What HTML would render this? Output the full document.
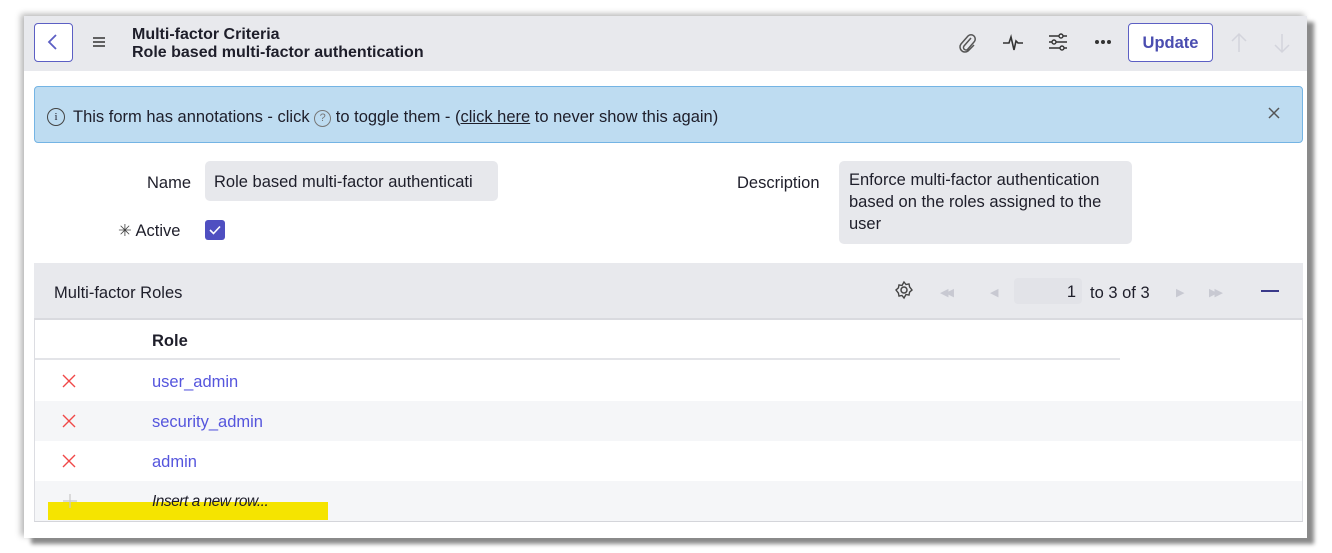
<!DOCTYPE html>
<html><head><style>
*{box-sizing:border-box;margin:0;padding:0}
body{width:1332px;height:553px;background:#fff;position:relative;font-family:"Liberation Sans",sans-serif;color:#1e1e2a;overflow:hidden}
.frame{position:absolute;left:24px;top:16px;width:1283px;height:522px;background:#fff;box-shadow:7px 6px 4px #8a8a8a,-3px -2px 6px #b5b5b5}
.abs{position:absolute}
.hdr{left:0;top:0;width:1283px;height:55px;background:#e8e9ed}
.back{left:10px;top:7px;width:39px;height:39px;border:1.5px solid #5c5fc4;border-radius:4px;background:#fff}
.t1{left:108px;top:10px;font-size:16px;font-weight:bold;line-height:18px}
.upd{left:1104px;top:7px;width:85px;height:39px;border:1.5px solid #5c5fc4;border-radius:4px;background:#fff;color:#4a4db0;font-weight:bold;font-size:16.5px;text-align:center;line-height:38px}
.banner{left:10px;top:70px;width:1269px;height:57px;background:#bedcf1;border:1px solid #74b4e4;border-radius:4px;font-size:16.5px;line-height:60px;padding-left:38px}
.lbl{font-size:16.5px}
.fld{background:#e7e8ec;border-radius:5px}
.sec{left:10px;top:247px;width:1269px;height:57px;background:#e8e9ed;border-bottom:2px solid #d9dadf}
.tbl{left:10px;top:304px;width:1269px;height:202px;border-left:1px solid #dcdde2;border-right:1px solid #dcdde2;border-bottom:2px solid #d4d5da}
.row{position:absolute;left:0;width:1267px;height:40px;font-size:16.5px;line-height:42px}
.row a{position:absolute;left:117px;color:#5555dd;text-decoration:none}
.x{position:absolute;left:27px;top:13px}
</style></head><body>
<div class="frame">
 <div class="abs hdr"></div>
 <div class="abs back"><svg width="36" height="36" viewBox="0 0 36 36" style="position:absolute;left:0;top:0"><path d="M21 11 L14 18 L21 25" fill="none" stroke="#5c5fc4" stroke-width="1.8"/></svg></div>
 <svg class="abs" style="left:68px;top:20px" width="14" height="12"><path d="M1 2H13M1 6H13M1 10H13" stroke="#333" stroke-width="1.6"/></svg>
 <div class="abs t1">Multi-factor Criteria<br>Role based multi-factor authentication</div>
 <svg class="abs" style="left:934px;top:16px" width="20" height="22" viewBox="0 0 20 22"><path d="M13 6 L6 14 a2.5 2.5 0 0 0 3.5 3.5 L16 10 a4 4 0 0 0 -6 -6 L3 12 a5 5 0 0 0 7 7 L16 13" fill="none" stroke="#555" stroke-width="1.5"/></svg>
 <svg class="abs" style="left:978px;top:17px" width="22" height="20"><path d="M1 10H7L9 4L12 17L14 8L16 10H21" fill="none" stroke="#333" stroke-width="1.6"/></svg>
 <svg class="abs" style="left:1023px;top:16px" width="22" height="20"><path d="M2 4H20M2 10H20M2 16H20" stroke="#333" stroke-width="1.4"/><circle cx="14" cy="4" r="2" fill="#e8e9ed" stroke="#333" stroke-width="1.4"/><circle cx="7" cy="10" r="2" fill="#e8e9ed" stroke="#333" stroke-width="1.4"/><circle cx="15" cy="16" r="2" fill="#e8e9ed" stroke="#333" stroke-width="1.4"/></svg>
 <svg class="abs" style="left:1070px;top:23px" width="18" height="6"><circle cx="3" cy="3" r="2" fill="#333"/><circle cx="9" cy="3" r="2" fill="#333"/><circle cx="15" cy="3" r="2" fill="#333"/></svg>
 <div class="abs upd">Update</div>
 <svg class="abs" style="left:1205px;top:16px" width="20" height="22"><path d="M10 2V20M3 9L10 2L17 9" fill="none" stroke="#d3d4dc" stroke-width="1.5"/></svg>
 <svg class="abs" style="left:1248px;top:16px" width="20" height="22"><path d="M10 2V20M3 13L10 20L17 13" fill="none" stroke="#d3d4dc" stroke-width="1.5"/></svg>

 <div class="abs banner">This form has annotations - click <span style="display:inline-block;width:17px;height:17px;border:1.2px solid #777;border-radius:50%;font-size:11px;line-height:15px;text-align:center;color:#777;vertical-align:1px">?</span> to toggle them - (<u>click here</u> to never show this again)
  <span style="position:absolute;left:12px;top:21px;width:18px;height:18px;border:1.3px solid #444;border-radius:50%;font-size:11px;line-height:16px;text-align:center;font-family:'Liberation Serif',serif">i</span>
  <svg style="position:absolute;right:22px;top:20px" width="12" height="12"><path d="M1 1L11 11M11 1L1 11" stroke="#555" stroke-width="1.5"/></svg>
 </div>

 <div class="abs lbl" style="left:123px;top:158px">Name</div>
 <div class="abs fld" style="left:181px;top:145px;width:293px;height:40px;font-size:16.5px;line-height:42px;padding-left:9px;white-space:nowrap;overflow:hidden">Role based multi-factor authenticati</div>
 <div class="abs lbl" style="left:94px;top:205px"><span style="color:#444">✳</span> Active</div>
 <div class="abs" style="left:181px;top:204px;width:20px;height:20px;background:#4f4fc1;border-radius:3px"><svg width="20" height="20"><path d="M5 10L8.5 13.5L15 6.5" fill="none" stroke="#fff" stroke-width="1.6"/></svg></div>
 <div class="abs lbl" style="left:713px;top:158px">Description</div>
 <div class="abs fld" style="left:815px;top:145px;width:293px;height:83px;font-size:16.5px;line-height:22px;padding:8px 10px">Enforce multi-factor authentication based on the roles assigned to the user</div>

 <div class="abs sec">
  <div class="abs" style="left:20px;top:21px;font-size:16.5px">Multi-factor Roles</div>
  <svg class="abs" style="left:860px;top:17px" width="20" height="20" viewBox="0 0 20 20"><circle cx="10" cy="10" r="3" fill="none" stroke="#444" stroke-width="1.5"/><path d="M10 2l2 2.5 3-.6.6 3L18 10l-2.4 2.1-.6 3-3-.6L10 18l-2-2.5-3 .6-.6-3L2 10l2.4-2.1.6-3 3 .6z" fill="none" stroke="#444" stroke-width="1.4"/></svg>
  <div class="abs" style="left:906px;top:23px;color:#c8c9d2;font-size:11px;letter-spacing:-3px">◀◀</div>
  <div class="abs" style="left:956px;top:23px;color:#c8c9d2;font-size:11px">◀</div>
  <div class="abs" style="left:980px;top:15px;width:68px;height:26px;background:#e2e3e8;border-radius:4px;text-align:right;padding-right:6px;font-size:16.5px;line-height:29px">1</div>
  <div class="abs" style="left:1056px;top:21px;font-size:16.5px">to 3 of 3</div>
  <div class="abs" style="left:1142px;top:23px;color:#c8c9d2;font-size:11px">▶</div>
  <div class="abs" style="left:1175px;top:23px;color:#c8c9d2;font-size:11px;letter-spacing:-3px">▶▶</div>
  <div class="abs" style="left:1227px;top:27px;width:18px;height:2px;background:#3a3a8a"></div>
 </div>

 <div class="abs tbl">
  <div class="row" style="top:0;border-bottom:2px solid #e3e4e8;width:1085px"><b style="position:absolute;left:117px">Role</b></div>
  <div class="row" style="top:41px"><svg class="x" width="14" height="14"><path d="M1 1L13 13M13 1L1 13" stroke="#f04848" stroke-width="1.4"/></svg><a>user_admin</a></div>
  <div class="row" style="top:81px;background:#f5f6f8"><svg class="x" width="14" height="14"><path d="M1 1L13 13M13 1L1 13" stroke="#f04848" stroke-width="1.4"/></svg><a>security_admin</a></div>
  <div class="row" style="top:121px"><svg class="x" width="14" height="14"><path d="M1 1L13 13M13 1L1 13" stroke="#f04848" stroke-width="1.4"/></svg><a>admin</a></div>
  <div class="row" style="top:161px;background:#f5f6f8">
   <div style="position:absolute;left:13px;top:21px;width:280px;height:18px;background:#f5e400"></div>
   <svg class="x" style="top:12px" width="16" height="16"><path d="M8 1V15M1 8H15" stroke="#c8c8c8" stroke-width="1.2"/></svg>
   <i style="position:absolute;left:117px;font-size:15.5px;letter-spacing:-0.5px">Insert a new row...</i>
  </div>
 </div>
</div>
</body></html>
